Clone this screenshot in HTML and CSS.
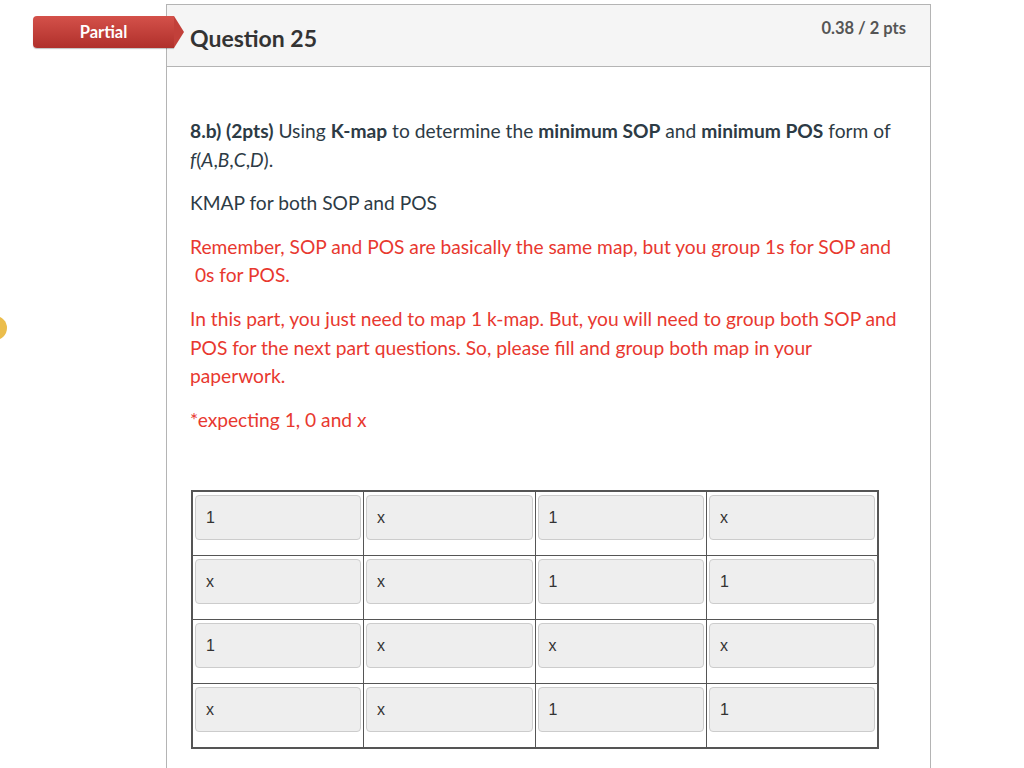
FILE: index.html
```html
<!DOCTYPE html>
<html>
<head>
<meta charset="utf-8">
<link rel="stylesheet" href="styles.css">
</head>
<body>
<div class="dot"></div>
<div class="question">
  <div class="badge">Partial</div>
  <div class="header">
    <div class="title">Question 25</div>
    <div class="points">0.38 / 2 pts</div>
  </div>
  <div class="body">
    <p><strong>8.b) (2pts)</strong> Using <strong>K-map</strong> to determine the <strong>minimum SOP</strong> and <strong>minimum POS</strong> form of <em>f</em>(<em>A</em>,<em>B</em>,<em>C</em>,<em>D</em>).</p>
    <p>KMAP for both SOP and POS</p>
    <p class="red">Remember, SOP and POS are basically the same map, but you group 1s for SOP and &nbsp;0s for POS.</p>
    <p class="red">In this part, you just need to map 1 k-map. But, you will need to group both SOP and POS for the next part questions. So, please fill and group both map in your paperwork.</p>
    <p class="red">*expecting 1, 0 and x</p>
    <table class="kmap">
      <tr><td><div class="inp">1</div></td><td><div class="inp">x</div></td><td><div class="inp">1</div></td><td><div class="inp">x</div></td></tr>
      <tr><td><div class="inp">x</div></td><td><div class="inp">x</div></td><td><div class="inp">1</div></td><td><div class="inp">1</div></td></tr>
      <tr><td><div class="inp">1</div></td><td><div class="inp">x</div></td><td><div class="inp">x</div></td><td><div class="inp">x</div></td></tr>
      <tr><td><div class="inp">x</div></td><td><div class="inp">x</div></td><td><div class="inp">1</div></td><td><div class="inp">1</div></td></tr>
    </table>
  </div>
</div>
</body>
</html>
```

FILE: styles.css
```css
html, body {
  margin: 0;
  padding: 0;
  background: #ffffff;
  overflow: hidden;
  height: 768px;
}
body {
  font-family: Lato, "Open Sans", sans-serif;
  color: #2d3b45;
  position: relative;
}
.dot {
  position: absolute;
  left: -17px;
  top: 316px;
  width: 24px;
  height: 24px;
  border-radius: 50%;
  background: #ebbd4c;
}
.question {
  position: relative;
  margin: 4px 0 0 166px;
  width: 763px;
  height: 800px;
  border: 1px solid #b4b4b4;
  border-bottom: none;
}
.badge {
  position: absolute;
  left: -134px;
  top: 11px;
  width: 141px;
  height: 32px;
  background: linear-gradient(#d4514a, #b0302b);
  border-radius: 4px 0 0 4px;
  color: #fff;
  font-weight: 700;
  font-size: 16.5px;
  line-height: 32px;
  text-align: center;
  box-shadow: 0 1px 1px rgba(0,0,0,0.25);
  z-index: 2;
}
.badge::after {
  content: "";
  position: absolute;
  right: -10px;
  top: 0;
  width: 0;
  height: 0;
  border-top: 16px solid transparent;
  border-bottom: 16px solid transparent;
  border-left: 10px solid #c2403a;
}
.header {
  display: flex;
  justify-content: space-between;
  align-items: flex-start;
  height: 61px;
  background: #f5f5f5;
  border-bottom: 1px solid #b4b4b4;
  padding: 0 24px 0 23px;
}
.title {
  font-size: 23px;
  font-weight: 700;
  color: #333;
  margin-top: 19px;
  line-height: 28px;
}
.points {
  font-size: 16.5px;
  font-weight: 700;
  color: #555;
  margin-top: 10px;
  line-height: 26px;
}
.body {
  padding: 50px 23px 0 23px;
  font-size: 19.2px;
  line-height: 28.6px;
  color: #2d3b45;
}
.body p {
  margin: 0 0 15px 0;
}
.body strong {
  font-weight: 700;
}
.red {
  color: #e8382f;
}
.kmap {
  margin-top: 56px;
  margin-left: 1px;
  border-collapse: collapse;
  border: 2px solid #555;
  width: 688px;
}
.kmap td {
  border: 1px solid #555;
  width: 25%;
  height: 64px;
  padding: 3px 2px 15px 2px;
  vertical-align: top;
  box-sizing: border-box;
}
.inp {
  height: 43px;
  border: 1px solid #cccccc;
  border-radius: 4px;
  background: #eeeeee;
  font-family: "Liberation Sans", Arial, sans-serif;
  font-size: 16px;
  color: #333;
  line-height: 43px;
  padding-left: 10px;
}
```
